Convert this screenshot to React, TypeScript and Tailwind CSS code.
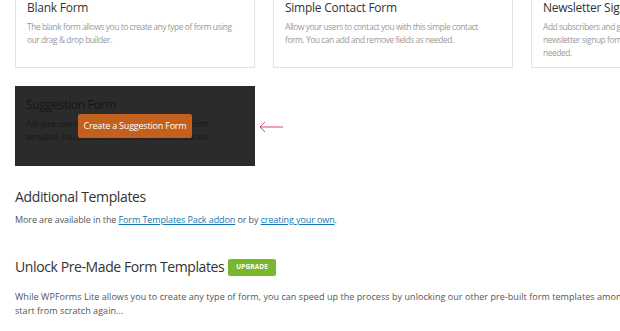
import React from "react";

const font = { fontFamily: '"Open Sans", "Noto Sans", sans-serif' };

function Card({ title, desc }: { title: string; desc: React.ReactNode }) {
  return (
    <div className="w-[240px] shrink-0 h-[80px] border border-[#e3e3e3] bg-white px-[11px] pt-[11px] overflow-hidden">
      <div className="text-[12px] leading-[16px] text-[#333] tracking-[-0.25px] whitespace-nowrap">{title}</div>
      <div className="mt-[4px] text-[8.4px] leading-[13px] text-[#9a9a9a] tracking-[-0.42px] whitespace-nowrap">{desc}</div>
    </div>
  );
}

export default function App() {
  return (
    <div className="w-[620px] h-[331px] overflow-hidden bg-white" style={font}>
      <div className="pl-[15px]">
        <div className="flex gap-[18px] -mt-[12px]">
          <Card title="Blank Form" desc={<>The blank form allows you to create any type of form using<br />our drag &amp; drop builder.</>} />
          <Card title="Simple Contact Form" desc={<>Allow your users to contact you with this simple contact<br />form. You can add and remove fields as needed.</>} />
          <Card title="Newsletter Signup Form" desc={<>Add subscribers and grow your email list with this<br />newsletter signup form. You can add and remove fields as<br />needed.</>} />
        </div>
        <div className="flex items-center mt-[18px]">
          <div className="relative w-[240px] h-[80px] bg-[#2b2b2b] px-[11px] pt-[11px]">
            <div className="text-[12px] leading-[16px] text-[#161616] tracking-[-0.25px]">Suggestion Form</div>
            <div className="mt-[4px] text-[8.4px] leading-[13px] text-[#181818] tracking-[-0.42px] whitespace-nowrap">
              Ask your users for suggestions with this simple form<br />template. You can add and remove fields as needed.
            </div>
            <div className="absolute left-[63px] top-[28px] w-[114px] h-[24px] bg-[#c3601d] rounded-[2px] flex items-center justify-center text-[9px] text-white tracking-[-0.2px] whitespace-nowrap">
              Create a Suggestion Form
            </div>
          </div>
          <svg width="26" height="12" viewBox="0 0 26 12" className="ml-[3px] mt-[1px]">
            <path d="M25 6H2M7 1L2 6l5 5" fill="none" stroke="#d9466c" strokeWidth="1" />
          </svg>
        </div>
        <div className="mt-[20px] text-[14px] leading-[22px] text-[#333] tracking-[-0.35px]">Additional Templates</div>
        <div className="mt-[5px] text-[9px] leading-[14px] text-[#555] tracking-[-0.1px]">
          More are available in the <span className="text-[#1477b5] underline">Form Templates Pack addon</span> or by{" "}
          <span className="text-[#1477b5] underline">creating your own</span>.
        </div>
        <div className="mt-[29px] flex items-center">
          <div className="text-[14px] leading-[22px] text-[#333] tracking-[-0.4px]">Unlock Pre-Made Form Templates</div>
          <div className="ml-[4px] h-[17px] px-[8px] flex items-center bg-[#78b82a] rounded-[2px] text-[6.5px] font-bold text-white tracking-[0.1px]">UPGRADE</div>
        </div>
        <div className="mt-[12px] text-[9px] leading-[14px] text-[#555] tracking-[0.05px] whitespace-nowrap">
          While WPForms Lite allows you to create any type of form, you can speed up the process by unlocking our other pre-built form templates among other<br />start from scratch again...
        </div>
      </div>
    </div>
  );
}
